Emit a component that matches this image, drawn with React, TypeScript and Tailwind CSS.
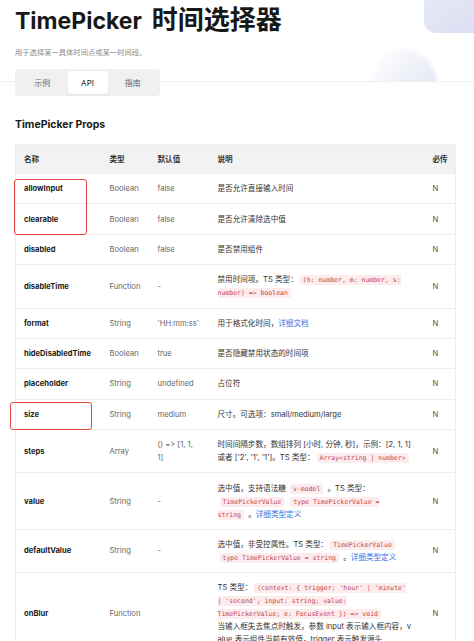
import React from "react";

const sans = "font-['Inter','Noto_Sans_CJK_SC',sans-serif]";

function Code({ children }: { children: React.ReactNode }) {
  return (
    <code className="mx-[2px] rounded-[2px] bg-[#fdeced] px-[3px] py-[1px] font-['DejaVu_Sans_Mono','Liberation_Mono',monospace] text-[6.5px] leading-[9px] text-[#c3474f]">
      {children}
    </code>
  );
}

function Link({ children }: { children: React.ReactNode }) {
  return <span className="text-[#2f6fe4]">{children}</span>;
}

type Row = {
  name: string;
  type: string;
  def: React.ReactNode;
  desc: React.ReactNode;
};

const rows: Row[] = [
  { name: "allowInput", type: "Boolean", def: "false", desc: "是否允许直接输入时间" },
  { name: "clearable", type: "Boolean", def: "false", desc: "是否允许清除选中值" },
  { name: "disabled", type: "Boolean", def: "false", desc: "是否禁用组件" },
  {
    name: "disableTime",
    type: "Function",
    def: "-",
    desc: (
      <>
        禁用时间项。TS 类型：<Code>(h: number, m: number, s: number) =&gt; boolean</Code>
      </>
    ),
  },
  {
    name: "format",
    type: "String",
    def: "'HH:mm:ss'",
    desc: (
      <>
        用于格式化时间，<Link>详细文档</Link>
      </>
    ),
  },
  { name: "hideDisabledTime", type: "Boolean", def: "true", desc: "是否隐藏禁用状态的时间项" },
  { name: "placeholder", type: "String", def: "undefined", desc: "占位符" },
  { name: "size", type: "String", def: "medium", desc: "尺寸。可选项：small/medium/large" },
  {
    name: "steps",
    type: "Array",
    def: "() => [1, 1, 1]",
    desc: (
      <>
        时间间隔步数，数组排列 [小时, 分钟, 秒]，示例：[2, 1, 1] 或者 ['2', '1', '1']。TS 类型：
        <Code>Array&lt;string | number&gt;</Code>
      </>
    ),
  },
  {
    name: "value",
    type: "String",
    def: "-",
    desc: (
      <>
        选中值，支持语法糖 <Code>v-model</Code> 。TS 类型：<Code>TimePickerValue</Code>{" "}
        <Code>
          type TimePickerValue =<br />string
        </Code>{" "}
        。<Link>详细类型定义</Link>
      </>
    ),
  },
  {
    name: "defaultValue",
    type: "String",
    def: "-",
    desc: (
      <>
        选中值，非受控属性。TS 类型：<Code>TimePickerValue</Code>{" "}
        <Code>type TimePickerValue = string</Code> 。<Link>详细类型定义</Link>
      </>
    ),
  },
  {
    name: "onBlur",
    type: "Function",
    def: "",
    desc: (
      <>
        TS 类型：
        <Code>
          (context: {"{"} trigger: 'hour' | 'minute'
          <br />| 'second'; input: string; value:
          <br />
          TimePickerValue; e: FocusEvent {"}"}) =&gt; void
        </Code>
        <br />
        <span className="break-all">当输入框失去焦点时触发，参数 input 表示输入框内容，value 表示组件当前有效值，trigger 表示触发源头</span>
      </>
    ),
  },
];

export default function App() {
  return (
    <div className={`min-h-screen bg-white text-[#333] [font-feature-settings:'calt'_0,'liga'_0] ${sans}`}>
      {/* header */}
      <div className="relative h-[82px] border-b border-[#efefef] px-[15px] pt-[6px]">
        <div className="pointer-events-none absolute inset-0 overflow-hidden">
          <div className="absolute left-[424px] top-[-12px] h-[45px] w-[70px] rounded-bl-[12px] bg-gradient-to-br from-[#e7eaf7] to-[#d8ddf1]" />
          <div className="absolute left-[372px] top-[50px] h-[64px] w-[64px] rounded-full bg-gradient-to-br from-white via-[#eef0f8] to-[#d9dcee] blur-[2px]" />
        </div>
        <h1 className="relative h-[27px] text-[23px] font-bold leading-[27px] text-[#181818]">
          TimePicker<span className="ml-[10px] text-[26px]">时间选择器</span>
        </h1>
        <p className="relative mt-[15px] text-[7.3px] leading-[10px] text-[#8c8c8c]">用于选择某一具体时间点或某一时间段。</p>
        <div className="relative mt-[11px] flex w-[145px] rounded-[4px] bg-[#f0f0f0] p-[2px] text-[8px] text-[#666]">
          <div className="flex h-[23px] flex-1 items-center justify-center">示例</div>
          <div className="flex h-[23px] w-[40px] items-center justify-center rounded-[3px] bg-white text-[#222] shadow-[0_1px_2px_rgba(0,0,0,0.06)]">API</div>
          <div className="flex h-[23px] flex-1 items-center justify-center">指南</div>
        </div>
      </div>

      {/* content */}
      <div className="px-[15px] pt-[36px]">
        <h2 className="text-[10.5px] font-bold leading-[14px] text-[#1a1a1a]">TimePicker Props</h2>
        <div className="relative mt-[12px] w-[440px]">
          <table className="w-[440px] table-fixed border-collapse border border-[#eeeeee] text-[7.6px] leading-[13px]">
            <colgroup>
              <col className="w-[86px]" />
              <col className="w-[48px]" />
              <col className="w-[60px]" />
              <col className="w-[215px]" />
              <col className="w-[31px]" />
            </colgroup>
            <thead>
              <tr className="h-[29px] bg-[#f2f2f2] text-left text-[#333]">
                <th className="px-[8px] font-semibold">名称</th>
                <th className="px-[8px] font-semibold">类型</th>
                <th className="px-[8px] font-semibold">默认值</th>
                <th className="px-[8px] font-semibold">说明</th>
                <th className="pl-[8px] pr-[2px] font-semibold">必传</th>
              </tr>
            </thead>
            <tbody>
              {rows.map((r) => (
                <tr key={r.name} className="border-t border-[#eeeeee] align-middle">
                  <td className="px-[8px] py-[8.2px] font-bold text-[#1c1c1c]">{r.name}</td>
                  <td className="px-[8px] py-[8.2px] text-[#666]">{r.type}</td>
                  <td className="py-[8.2px] pl-[8px] pr-[14px] text-[#666]">{r.def}</td>
                  <td className="py-[8.2px] pl-[8px] pr-[10px] text-[#333]">{r.desc}</td>
                  <td className="py-[8.2px] pl-[8px] pr-[2px] text-[#555]">N</td>
                </tr>
              ))}
            </tbody>
          </table>
          {/* annotation boxes */}
          <div className="pointer-events-none absolute left-[-1px] top-[35px] h-[56px] w-[73px] rounded-[3px] border-[1.5px] border-[#e0483f]" />
          <div className="pointer-events-none absolute left-[-5px] top-[258px] h-[28px] w-[82px] rounded-[3px] border-[1.5px] border-[#e0483f]" />
        </div>
      </div>
    </div>
  );
}
